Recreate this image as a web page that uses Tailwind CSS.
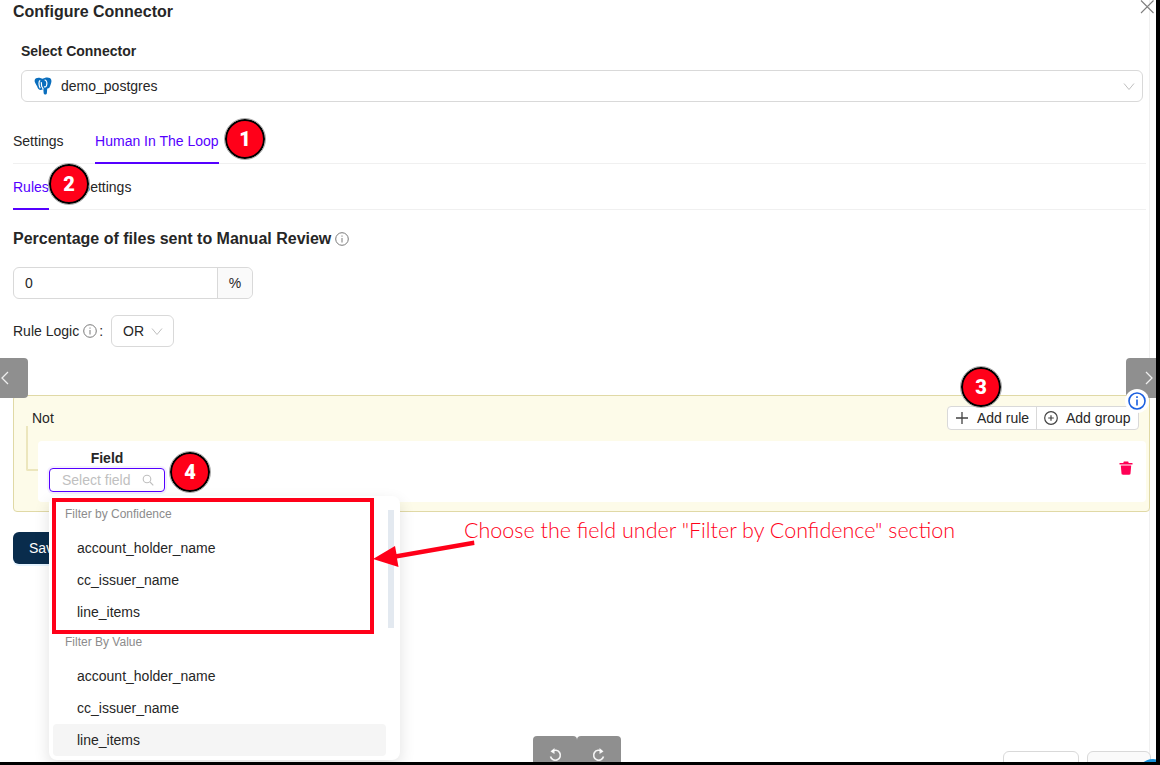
<!DOCTYPE html>
<html lang="en">
<head>
    <meta charset="UTF-8">
    <title>Configure Connector</title>
    <script src="https://cdn.jsdelivr.net/npm/@tailwindcss/browser@4"></script>
</head>
<body class="bg-white font-['Liberation_Sans',sans-serif] text-sm text-[#262626] overflow-hidden">
    <div class="relative w-[1160px] h-[765px] overflow-hidden bg-white">
        <!-- Modal body -->
        <main class="w-[1150px] h-[762px] pl-[13px] pr-[3px] border-r border-[#f0f0f0]">
            <h1 class="pt-[3px] text-base leading-[18px] font-bold">Configure Connector</h1>

            <section class="mt-[22px] pl-2 pr-[3px]">
                <h2 class="font-bold leading-[16px]">Select Connector</h2>
                <div class="mt-[11px] h-8 border border-[#d9d9d9] rounded-md flex items-center pl-[11px] pr-[7px]">
                    <svg class="w-5 h-5" viewBox="0 0 18 18">
                        <path fill="#0a6ebd" d="M1.500 3.500C2 1.800 4.500 1.200 6.500 1.800L8.500 2.500 10.500 1.800C13 1 15.800 1.500 16.500 3.500c.5 2-.8 4.500-1.500 6.500-.4 1.200-1.300 1.500-2.200 1.200l-.3 4.300c-.3 1.500-2.500 1.500-2.900 0L9.300 12 7 12.500C5 12.800 4.300 11 3.800 9.500 3 7.500 1 5.500 1.500 3.500z"/>
                        <path fill="none" stroke="#fff" stroke-width="1.100" d="M6.500 4c-1.500.5-1.500 4 0 7M10.500 3.500c2 .5 2.500 3 1.500 5.500-.5 1-1.500 1-2 .5M7.500 5.500c-.3 2 .3 4.500 1.800 6.500"/>
                    </svg>
                    <span class="ml-2 flex-1">demo_postgres</span>
                    <svg class="w-3 h-3 text-[#bfbfbf]" viewBox="0 0 12 12" fill="none" stroke="currentColor"><path d="M1 3.500l5 6 5-6"/></svg>
                </div>
            </section>

            <!-- Outer tabs -->
            <nav class="mt-4 h-[46px] flex gap-8 border-b border-[#f0f0f0]">
                <span class="leading-[47px]">Settings</span>
                <span class="leading-[47px] text-[#5500ff] border-b-2 border-[#5500ff] h-[46px] ml-[-0.5px]">Human In The Loop</span>
            </nav>

            <!-- Inner tabs -->
            <nav class="h-[46px] flex gap-8 border-b border-[#f0f0f0]">
                <span class="leading-[46px] text-[#5500ff] border-b-2 border-[#5500ff] h-[46px]">Rules</span>
                <span class="leading-[46px]">Settings</span>
            </nav>

            <div class="mt-5 flex items-center">
                <h2 class="text-base leading-[18px] font-bold">Percentage of files sent to Manual Review</h2>
                <svg class="ml-1 w-[14px] h-[14px] text-[#7a7a7a]" viewBox="0 0 14 14" fill="none" stroke="currentColor"><circle cx="7" cy="7" r="6.300"/><path d="M7 6v4.500M7 3.500v1.200"/></svg>
            </div>

            <div class="mt-[19px] w-[240px] h-8 flex border border-[#d9d9d9] rounded-md">
                <span class="flex-1 pl-[11px] leading-[30px]">0</span>
                <span class="w-[35px] text-center leading-[30px] bg-[#fafafa] border-l border-[#d9d9d9] rounded-r-md">%</span>
            </div>

            <div class="mt-4 flex items-center">
                <span>Rule Logic</span>
                <svg class="ml-1 w-[14px] h-[14px] text-[#7a7a7a]" viewBox="0 0 14 14" fill="none" stroke="currentColor"><circle cx="7" cy="7" r="6.300"/><path d="M7 6v4.500M7 3.500v1.200"/></svg>
                <span class="ml-[2px]">:</span>
                <div class="ml-2 w-[63px] h-8 border border-[#d9d9d9] rounded-md flex items-center pl-[11px] gap-[7px]">
                    <span>OR</span>
                    <svg class="w-3 h-3 text-[#bfbfbf]" viewBox="0 0 12 12" fill="none" stroke="currentColor"><path d="M1 3.500l5 6 5-6"/></svg>
                </div>
            </div>

            <!-- Query builder -->
            <section class="relative mt-12 w-[1137px] h-[117px] bg-[#fdfbe9] border border-[#e0d9a6] rounded-[4px]">
                <div class="pl-[18px] pr-[10px] pt-[10px] flex items-start justify-between">
                    <span class="leading-[24px]">Not</span>
                    <div class="flex w-[192px] h-6 bg-white border border-[#d9d9d9] rounded-[4px] leading-[22px]">
                        <span class="w-[89px] flex items-center pl-[7px] gap-2 border-r border-[#d9d9d9]">
                            <svg class="w-[14px] h-[14px] text-[#434343]" viewBox="0 0 14 14" fill="none" stroke="currentColor" stroke-width="1.300"><path d="M7 1v12M1 7h12"/></svg>
                            Add rule
                        </span>
                        <span class="flex-1 flex items-center pl-[7px] gap-[8px]">
                            <svg class="w-[14px] h-[14px] text-[#434343]" viewBox="0 0 14 14" fill="none" stroke="currentColor" stroke-width="1.200"><circle cx="7" cy="7" r="6.300"/><path d="M7 4.200v5.600M4.200 7h5.600"/></svg>
                            Add group
                        </span>
                    </div>
                </div>
                <div class="absolute left-3 top-[30px] w-3 h-[45px] border-l-2 border-b-2 border-[#ece6bd] rounded-bl-[2px]"></div>
                <div class="absolute left-6 right-[3px] top-[45px] h-[61px] bg-white rounded-[4px] flex pl-[11px] pr-[13px]">
                    <div class="w-[116px] text-center">
                        <div class="pt-[7px] leading-[20px] font-bold">Field</div>
                        <div class="h-6 border border-[#5500ff] rounded-[4px] flex items-center pl-3 pr-[10px] text-[#bfbfbf] shadow-[0_0_0_2px_rgba(85,0,255,0.06)]">
                            <span class="flex-1 text-left">Select field</span>
                            <svg class="w-3 h-3 text-[#bfbfbf]" viewBox="0 0 12 12" fill="none" stroke="currentColor" stroke-width="1.100"><circle cx="5" cy="5" r="3.800"/><path d="M8 8l3.300 3.300"/></svg>
                        </div>
                    </div>
                    <svg class="ml-auto mt-5 w-[14px] h-[14px] text-[#ff0055]" viewBox="0 0 14 14" fill="currentColor"><path d="M4.800 .5h4.400l.5 1.500H13.500v1.500H.5V2h3.800zM1.800 4.500h10.400L11.500 12.500c-.1.800-.6 1.200-1.300 1.200H3.800c-.7 0-1.200-.4-1.300-1.200z"/></svg>
                </div>
            </section>

            <button class="mt-5 w-[90px] h-8 bg-[#092c4c] text-white rounded-md text-left pl-4 shadow-[0_2px_0_rgba(5,145,255,0.1)]">Save</button>
        </main>

        <!-- Black screenshot edges -->
        <div class="absolute top-0 right-0 w-1 h-full bg-black z-30"></div>
        <div class="absolute bottom-0 left-0 w-full h-[3px] bg-black z-30"></div>

        <!-- Close icon -->
        <svg class="absolute left-[1140px] top-0 w-[14px] h-[14px] text-[#7f7f7f]" viewBox="0 0 14 14" fill="none" stroke="currentColor" stroke-width="1.100"><path d="M1 .5l12.500 12.500M13.500 .5L1 13"/></svg>

        <!-- Viewer controls -->
        <div class="absolute left-0 top-[358px] w-7 h-10 bg-[#8f8f8f] rounded-r-[4px] flex items-center">
            <svg class="w-[9px] h-[14px] text-white/85" viewBox="0 0 9 14" fill="none" stroke="currentColor" stroke-width="1.300"><path d="M8 1L2 7l6 6"/></svg>
        </div>
        <div class="absolute left-[1126px] top-[358px] w-[30px] h-10 bg-[#8f8f8f] rounded-l-[4px] flex items-center justify-end pr-[2px]">
            <svg class="w-[9px] h-[14px] text-white/85" viewBox="0 0 9 14" fill="none" stroke="currentColor" stroke-width="1.300"><path d="M1 1l6 6-6 6"/></svg>
        </div>
        <div class="absolute left-[1125px] top-[389px] w-6 h-6 rounded-full bg-white flex items-center justify-center">
            <svg class="w-[18px] h-[18px] text-[#1a5fe0]" viewBox="0 0 18 18" fill="none" stroke="currentColor" stroke-width="1.600"><circle cx="9" cy="9" r="8"/><path d="M9 7.500v6M9 4.300v1.800"/></svg>
        </div>
        <div class="absolute left-[533px] top-[736px] w-[88px] h-[29px] flex">
            <span class="flex-1 flex justify-center pt-[11px] bg-[#8f8f8f] rounded-t-[4px]">
                <svg class="w-[14px] h-[16px] text-white/90" viewBox="0 0 14 16" fill="none" stroke="currentColor" stroke-width="1.600"><path d="M4 4.500a5 5 0 1 1-1.500 5"/><path fill="currentColor" stroke="none" d="M6.500 1v6L2.500 4.500z"/></svg>
            </span>
            <span class="flex-1 flex justify-center pt-[11px] bg-[#8f8f8f] rounded-t-[4px]">
                <svg class="w-[14px] h-[16px] text-white/90" viewBox="0 0 14 16" fill="none" stroke="currentColor" stroke-width="1.600"><path d="M10 4.500a5 5 0 1 0 1.500 5"/><path fill="currentColor" stroke="none" d="M7.500 1v6l4-2.500z"/></svg>
            </span>
        </div>

        <!-- Footer buttons cut by the edge -->
        <div class="absolute left-[1003px] top-[751px] w-[76px] h-8 bg-white border border-[#d9d9d9] rounded-md"></div>
        <div class="absolute left-[1087px] top-[751px] w-[64px] h-8 bg-[#fafafa] border border-[#d9d9d9] rounded-md"></div>
        <div class="absolute left-[1137px] top-[759px] w-8 h-8 rounded-full bg-[#1890d8] z-20"></div>

        <!-- Field dropdown -->
        <div class="absolute left-[49px] top-[496px] w-[351px] h-[264px] bg-white rounded-lg shadow-[0_6px_16px_rgba(0,0,0,0.12)] p-1 z-10">
            <div class="w-[333px]">
                <div class="h-8 pl-3 pt-[6px] text-xs leading-[16px] text-[#8c8c8c]">Filter by Confidence</div>
                <div class="h-8 pl-6 leading-8">account_holder_name</div>
                <div class="h-8 pl-6 leading-8">cc_issuer_name</div>
                <div class="h-8 pl-6 leading-8">line_items</div>
                <div class="h-8 pl-3 pt-[6px] text-xs leading-[16px] text-[#8c8c8c]">Filter By Value</div>
                <div class="h-8 pl-6 leading-8">account_holder_name</div>
                <div class="h-8 pl-6 leading-8">cc_issuer_name</div>
                <div class="h-8 pl-6 leading-8 bg-[#f5f5f5] rounded-[4px]">line_items</div>
            </div>
            <div class="absolute left-[339px] top-[14px] w-[6px] h-[118px] bg-[#e3e9f0]"></div>
        </div>

        <!-- Annotations -->
        <div class="absolute left-[52px] top-[498px] w-[322px] h-[136px] border-4 border-[#ff0019] z-20"></div>
        <svg class="absolute left-[370px] top-[535px] w-[110px] h-[35px] z-20" viewBox="0 0 110 35" fill="#ff0019"><path d="M104 5.500l.5 4.500L27 23.500l1.500 8.500L3 24l22-13 1.500 8z"/></svg>
        <p class="absolute left-[464px] top-[516px] font-['Lato',sans-serif] font-light text-[21.500px] leading-[28px] text-[#ff0019] z-20">Choose the field under "Filter by Confidence" section</p>

        <span class="absolute left-[225px] top-[119px] w-10 h-10 rounded-full bg-[#ff0019] border-2 border-black outline-1 outline-[#aaa] text-white font-['Roboto',sans-serif] font-black text-[20px] flex items-center justify-center z-20">1</span>
        <span class="absolute left-[49px] top-[164px] w-10 h-10 rounded-full bg-[#ff0019] border-2 border-black outline-1 outline-[#aaa] text-white font-['Roboto',sans-serif] font-black text-[20px] flex items-center justify-center z-20">2</span>
        <span class="absolute left-[961px] top-[367px] w-10 h-10 rounded-full bg-[#ff0019] border-2 border-black outline-1 outline-[#aaa] text-white font-['Roboto',sans-serif] font-black text-[20px] flex items-center justify-center z-20">3</span>
        <span class="absolute left-[170px] top-[452px] w-10 h-10 rounded-full bg-[#ff0019] border-2 border-black outline-1 outline-[#aaa] text-white font-['Roboto',sans-serif] font-black text-[20px] flex items-center justify-center z-20">4</span>
    </div>
</body>
</html>
